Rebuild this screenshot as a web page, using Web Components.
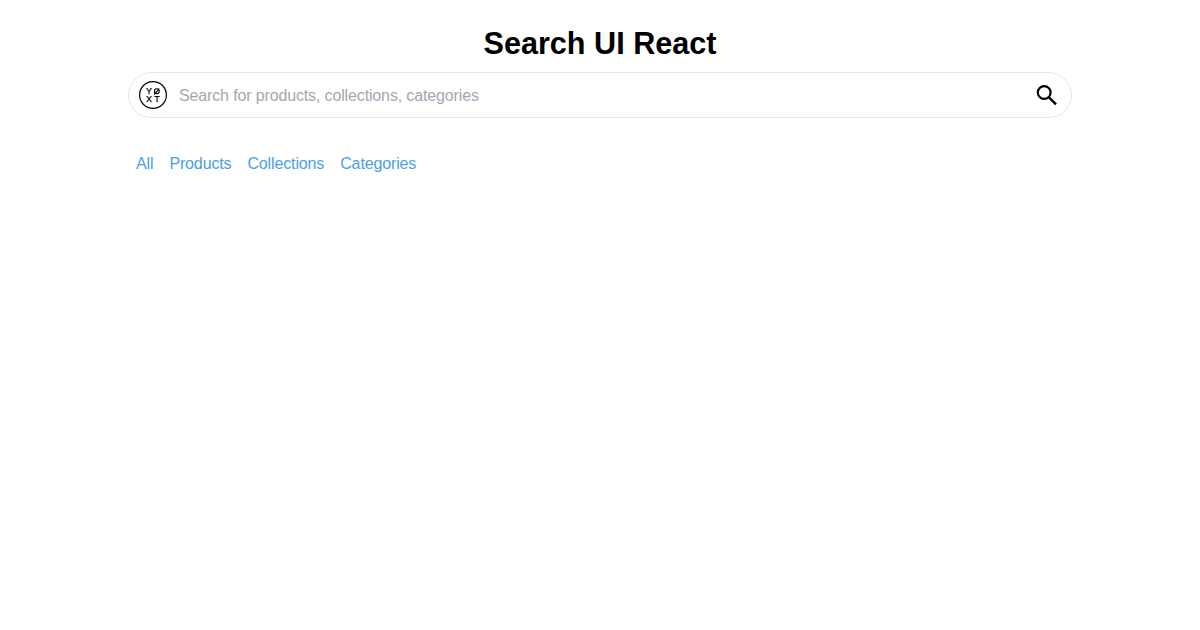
<!DOCTYPE html>
<html>
<head>
<meta charset="utf-8">
<title>Search UI React</title>
<style>
  html, body { margin: 0; padding: 0; background: #fff; }
  body { font-family: "Liberation Sans", Arial, sans-serif; }
</style>
</head>
<body>
<search-page>
  <search-title>Search UI React</search-title>
  <search-bar placeholder="Search for products, collections, categories"></search-bar>
  <search-nav>
    <a href="#all">All</a>
    <a href="#products">Products</a>
    <a href="#collections">Collections</a>
    <a href="#categories">Categories</a>
  </search-nav>
</search-page>

<script>
class SearchPage extends HTMLElement {
  connectedCallback() {
    this.attachShadow({ mode: 'open' });
    this.shadowRoot.innerHTML = `
      <style>
        :host {
          display: flex;
          flex-direction: column;
          width: 944px;
          margin: 0 auto;
          padding-top: 24px;
        }
      </style>
      <slot></slot>
    `;
  }
}
customElements.define('search-page', SearchPage);

class SearchTitle extends HTMLElement {
  connectedCallback() {
    this.attachShadow({ mode: 'open' });
    this.shadowRoot.innerHTML = `
      <style>
        :host {
          display: block;
          text-align: center;
          font-size: 30.6px;
          line-height: 38px;
          font-weight: 700;
          color: #000;
          margin-bottom: 10px;
        }
      </style>
      <slot></slot>
    `;
  }
}
customElements.define('search-title', SearchTitle);

class SearchBar extends HTMLElement {
  connectedCallback() {
    this.attachShadow({ mode: 'open' });
    const placeholder = this.getAttribute('placeholder') || '';
    this.shadowRoot.innerHTML = `
      <style>
        :host {
          display: flex;
          align-items: center;
          box-sizing: border-box;
          height: 46px;
          padding: 0 12px 0 10px;
          border: 1px solid #e5e7eb;
          border-radius: 23px;
          background: #fff;
        }
        .logo { flex: none; width: 28px; height: 28px; display: block; }
        .logo text {
          font-family: "Liberation Sans", Arial, sans-serif;
          font-size: 9px;
          text-anchor: middle;
          fill: #000;
          stroke: #000;
          stroke-width: 0.25;
        }
        input {
          flex: 1;
          min-width: 0;
          border: 0;
          outline: 0;
          padding: 0;
          margin: 1px 0 0 12px;
          background: transparent;
          font: 16px/24px "Liberation Sans", Arial, sans-serif;
          letter-spacing: -0.14px;
          color: #000;
        }
        input::placeholder { color: #a5a6b2; opacity: 1; }
        button {
          flex: none;
          display: flex;
          border: 0;
          padding: 0;
          background: none;
          cursor: pointer;
        }
        button svg { width: 24px; height: 24px; display: block; }
      </style>
      <svg class="logo" viewBox="0 0 28 28" aria-label="Yext">
        <circle cx="14" cy="14" r="13.4" fill="none" stroke="#000" stroke-width="1.2"/>
        <text x="10" y="13.2">Y</text>
        <text x="10" y="21">X</text>
        <text x="18" y="21">T</text>
        <circle cx="17.8" cy="10.2" r="2.4" fill="none" stroke="#000" stroke-width="1.1"/>
        <path d="M15.2 13.6 L20.2 7.6" fill="none" stroke="#000" stroke-width="1.1"/>
      </svg>
      <input type="text" placeholder="${placeholder}">
      <button type="button" aria-label="Search">
        <svg viewBox="0 0 24 24" fill="none" stroke="#000">
          <circle cx="9.2" cy="9.5" r="6.4" stroke-width="2.2"/>
          <path d="M14 14.3 L21 21.3" stroke-width="2.4"/>
        </svg>
      </button>
    `;
  }
}
customElements.define('search-bar', SearchBar);

class SearchNav extends HTMLElement {
  connectedCallback() {
    this.attachShadow({ mode: 'open' });
    this.shadowRoot.innerHTML = `
      <style>
        :host {
          display: flex;
          gap: 16px;
          margin-top: 34px;
          padding: 0 8px;
          font-size: 16px;
          line-height: 24px;
          letter-spacing: -0.136px;
        }
        ::slotted(a) {
          color: #4a9fe8;
          text-decoration: none;
        }
      </style>
      <slot></slot>
    `;
  }
}
customElements.define('search-nav', SearchNav);
</script>
</body>
</html>
